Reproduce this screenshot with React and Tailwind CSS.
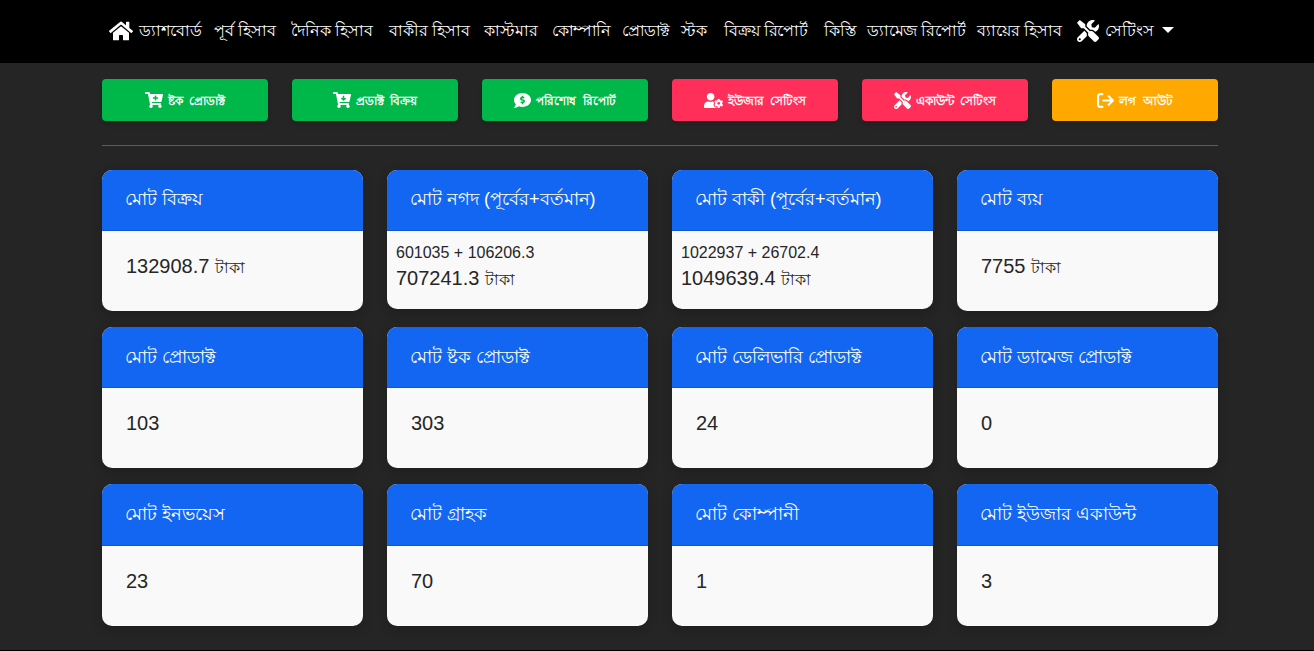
import { FaHome, FaTools, FaCartPlus, FaCartArrowDown, FaCommentDollar, FaUserCog } from 'react-icons/fa';
import { FaArrowRightFromBracket } from 'react-icons/fa6';

const nav = [
  { label: 'ড্যাশবোর্ড', width: 'w-[75px]' },
  { label: 'পূর্ব হিসাব', width: 'w-[77px]' },
  { label: 'দৈনিক হিসাব', width: 'w-[98px]' },
  { label: 'বাকীর হিসাব', width: 'w-[95px]' },
  { label: 'কাস্টমার', width: 'w-[68px]' },
  { label: 'কোম্পানি', width: 'w-[70px] tracking-[-0.8px]' },
  { label: 'প্রোডাক্ট', width: 'w-[59px] tracking-[-0.8px]' },
  { label: 'স্টক', width: 'w-[43px]' },
  { label: 'বিক্রয় রিপোর্ট', width: 'w-[100px] tracking-[-0.2px]' },
  { label: 'কিস্তি', width: 'w-[43px]' },
  { label: 'ড্যামেজ রিপোর্ট', width: 'w-[110px] tracking-[-0.3px]' },
  { label: 'ব্যায়ের হিসাব', width: 'w-[100px]' },
];

const actions = [
  { label: 'ষ্টক প্রোডাক্ট', icon: FaCartPlus, color: 'bg-[#00b74a]', iconSize: 'text-[18px]' },
  { label: 'প্রডাক্ট বিক্রয়', icon: FaCartArrowDown, color: 'bg-[#00b74a]', iconSize: 'text-[18px]' },
  { label: 'পরিশোধ রিপোর্ট', icon: FaCommentDollar, color: 'bg-[#00b74a]', iconSize: 'text-[17px]' },
  { label: 'ইউজার সেটিংস', icon: FaUserCog, color: 'bg-[#ff2f5a]', iconSize: 'text-[19px]' },
  { label: 'একাউন্ট সেটিংস', icon: FaTools, color: 'bg-[#ff2f5a]', iconSize: 'text-[17px]' },
  { label: 'লগ আউট', icon: FaArrowRightFromBracket, color: 'bg-[#ffa900]', iconSize: 'text-[17px]' },
];

const rows = [
  [
    { title: 'মোট বিক্রয়', value: '132908.7', unit: 'টাকা' },
    { title: 'মোট নগদ (পূর্বের+বর্তমান)', sum: '601035 + 106206.3', value: '707241.3', unit: 'টাকা' },
    { title: 'মোট বাকী (পূর্বের+বর্তমান)', sum: '1022937 + 26702.4', value: '1049639.4', unit: 'টাকা' },
    { title: 'মোট ব্যয়', value: '7755', unit: 'টাকা' },
  ],
  [
    { title: 'মোট প্রোডাক্ট', value: '103' },
    { title: 'মোট ষ্টক প্রোডাক্ট', value: '303' },
    { title: 'মোট ডেলিভারি প্রোডাক্ট', value: '24' },
    { title: 'মোট ড্যামেজ প্রোডাক্ট', value: '0' },
  ],
  [
    { title: 'মোট ইনভয়েস', value: '23' },
    { title: 'মোট গ্রাহক', value: '70' },
    { title: 'মোট কোম্পানী', value: '1' },
    { title: 'মোট ইউজার একাউন্ট', value: '3' },
  ],
];

function StatCard({ card }) {
  return (
    <div className="self-start overflow-hidden rounded-[10px] bg-[#f9f9f9] shadow-[0_4px_12px_rgba(0,0,0,0.2)]">
      <div className="flex h-[61.35px] items-center border-b border-[#0f57d0] bg-[#1266f1] pl-[23px] pr-6 text-[18px] text-white">
        {card.title}
      </div>
      {card.sum ? (
        <div className="h-[78px] px-[9px] pt-[10px] text-[#262626]">
          <div className="text-[16px] leading-6">{card.sum}</div>
          <div className="text-[20px] leading-[26px]">
            {card.value} <span className="text-[16px]">{card.unit}</span>
          </div>
        </div>
      ) : (
        <div className="h-[80px] px-6 pt-[20px] text-[20px] leading-[30px] text-[#262626]">
          {card.value} {card.unit && <span className="text-[16px]">{card.unit}</span>}
        </div>
      )}
    </div>
  );
}

export default function App() {
  return (
    <div className="bg-[#252525] font-['Liberation_Sans',sans-serif]">
      <header className="flex h-[63px] items-center bg-black pb-[2px] pl-[109px] text-[16px] text-white">
        <FaHome className="mr-[6px] text-[24px]" />
        {nav.map((n) => (
          <span key={n.label} className={`whitespace-nowrap ${n.width}`}>{n.label}</span>
        ))}
        <FaTools className="mr-[6px] text-[22px]" />
        <span>সেটিংস</span>
        <span className="ml-[8px] mt-[-2px] h-0 w-0 border-x-[6px] border-t-[6px] border-x-transparent border-t-white" />
      </header>

      <main className="h-[587px] pl-[102px] pr-[96px] pt-4">
        <div className="grid grid-cols-6 gap-6">
          {actions.map(({ label, icon: Icon, color, iconSize }) => (
            <button key={label} className={`flex h-[42px] items-center justify-center gap-[5px] rounded-[4px] text-[12px] font-semibold text-white shadow-md [word-spacing:3px] ${color}`}>
              <Icon className={iconSize} />
              <span className="pt-[2px]">{label}</span>
            </button>
          ))}
        </div>

        <hr className="mb-[23.6px] mt-6 border-t border-[#5c5c5c]" />

        <div className="flex flex-col gap-4">
          {rows.map((row, i) => (
            <div key={i} className="grid grid-cols-4 gap-6">
              {row.map((card) => (
                <StatCard key={card.title} card={card} />
              ))}
            </div>
          ))}
        </div>
      </main>
      <footer className="h-px bg-black" />
    </div>
  );
}
